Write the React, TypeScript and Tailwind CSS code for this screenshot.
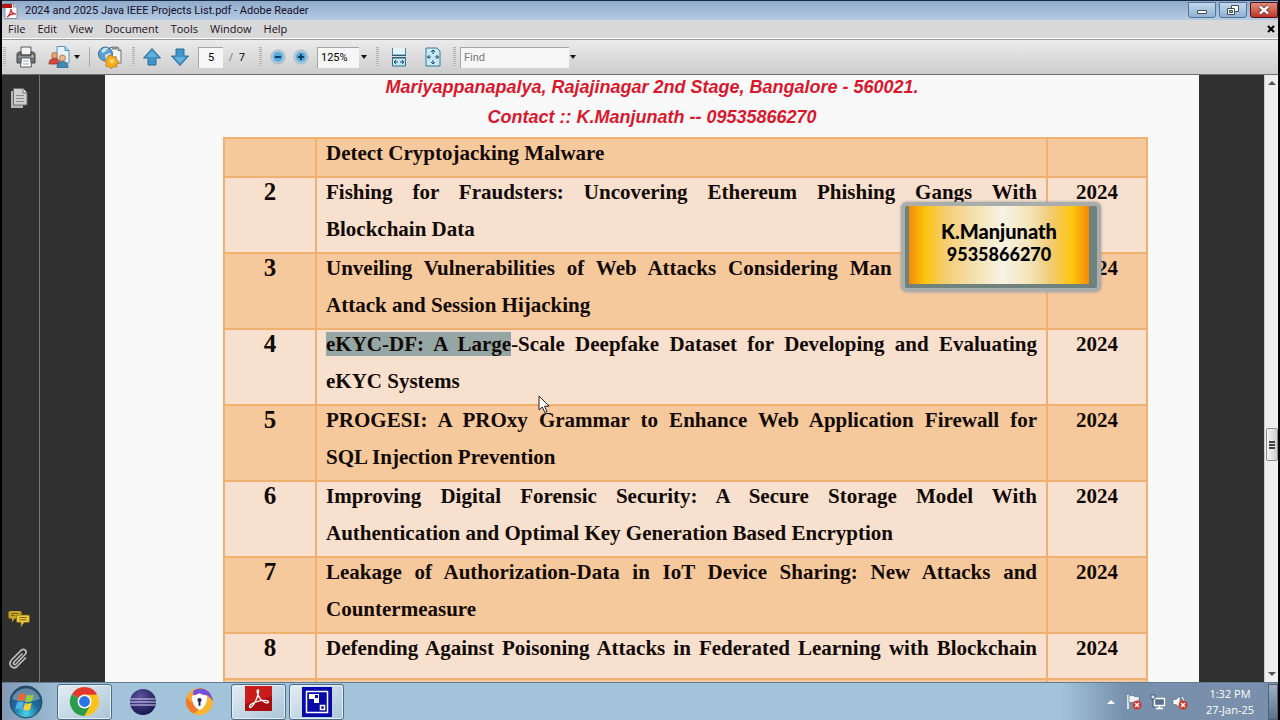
import React from 'react';

interface Project {
  no: string;
  lines: string[];
  year: string;
  selected?: string;
}

const projects: Project[] = [
  { no: '2', lines: ['Fishing for Fraudsters: Uncovering Ethereum Phishing Gangs With', 'Blockchain Data'], year: '2024' },
  { no: '3', lines: ['Unveiling Vulnerabilities of Web Attacks Considering Man in the Middle', 'Attack and Session Hijacking'], year: '2024' },
  { no: '4', selected: 'eKYC-DF: A Large', lines: ['-Scale Deepfake Dataset for Developing and Evaluating', 'eKYC Systems'], year: '2024' },
  { no: '5', lines: ['PROGESI: A PROxy Grammar to Enhance Web Application Firewall for', 'SQL Injection Prevention'], year: '2024' },
  { no: '6', lines: ['Improving Digital Forensic Security: A Secure Storage Model With', 'Authentication and Optimal Key Generation Based Encryption'], year: '2024' },
  { no: '7', lines: ['Leakage of Authorization-Data in IoT Device Sharing: New Attacks and', 'Countermeasure'], year: '2024' },
  { no: '8', lines: ['Defending Against Poisoning Attacks in Federated Learning with Blockchain'], year: '2024' }
];

const menus = ['File', 'Edit', 'View', 'Document', 'Tools', 'Window', 'Help'];

function ReaderIcon() {
  return (
    <svg className="w-4 h-4" viewBox="0 0 16 16">
      <path d="M3 .5h8.500l3.500 3.500v11.500H3z" fill="#fff" stroke="#8b8b93" />
      <path d="M11.500.5V4H15" fill="#ddd" stroke="#8b8b93" />
      <path d="M0 1h10v4H0z" fill="#b3161b" />
      <path d="M5 14c2-1 4-5 4-8 0 3 2 5 5 5-3-.5-6 0-9 3" fill="none" stroke="#cf2226" strokeWidth="1.200" />
    </svg>
  );
}

function PrinterIcon() {
  return (
    <svg className="w-5 h-6" viewBox="0 0 20 24">
      <path d="M5 2h10v8H5z" fill="#f4f4f4" stroke="#55585a" />
      <path d="M1 8.500 3 7h2v3h10V7h2l2 1.500V18H1z" fill="#6f7476" stroke="#3e4244" />
      <path d="M2 12h16" stroke="#a8adaf" />
      <path d="M5.500 13h9l1 9h-11z" fill="#fff" stroke="#55585a" />
      <path d="M7 16h6M7 19h6" stroke="#9fa3a5" />
      <circle cx="16.500" cy="11" r="1" fill="#bfe07c" />
    </svg>
  );
}

function ShareIcon() {
  return (
    <svg className="w-6 h-6" viewBox="0 0 24 24">
      <path d="M9 1.500h8l4 4V18H9z" fill="#e6f3fa" stroke="#5b95b5" />
      <path d="M17 1.500v4h4" fill="#9ccbe2" stroke="#5b95b5" />
      <circle cx="6.500" cy="10.500" r="3" fill="#e5a56c" stroke="#a35b2d" strokeWidth=".7" />
      <path d="M1 19c0-4 2-5.500 5.500-5.500S12 15 12 19z" fill="#d14a3f" stroke="#94291f" strokeWidth=".7" />
      <circle cx="14.500" cy="13" r="3" fill="#edbd86" stroke="#a35b2d" strokeWidth=".7" />
      <path d="M9 22.500c0-4 2-6 5.500-6s5.500 2 5.500 6z" fill="#4489b4" stroke="#275f83" strokeWidth=".7" />
    </svg>
  );
}

function CollaborateIcon() {
  return (
    <svg className="w-6 h-6" viewBox="0 0 24 24">
      <path d="M12 2.500h8l3 3V18H12z" fill="#f5f5f5" stroke="#6c6c6c" />
      <path d="M14 1.500h5v3h-5z" fill="#8b8b8b" />
      <path d="M20 2.500v3h3" fill="#ccc" stroke="#6c6c6c" />
      <circle cx="7.500" cy="9" r="7" fill="#5d9fd0" stroke="#3c6e96" />
      <path d="M3 6c2-3 5-4 7-3L8 6 5 8zM7 10l4-2 2 1-2 4-3 1z" fill="#cfe3ef" />
      <path d="m13 10 2 2 3-.500.500 3 2.500 2-2 2.500-.500 3-3-.300-2.500 1.800-2.300-2-3-.500.500-3L7 15.500l2.500-2 .500-2.500z" fill="#f6ad1c" stroke="#b9760a" strokeWidth=".8" />
      <circle cx="14" cy="16" r="2.500" fill="#fbd165" />
    </svg>
  );
}

function ArrowIcon({ down }: { down?: boolean }) {
  return (
    <svg className={down ? 'w-5 h-5 rotate-180' : 'w-5 h-5'} viewBox="0 0 20 20">
      <path d="M10 1.500 18.500 11H14v7H6v-7H1.500z" fill="#3f94cd" stroke="#2c6c96" strokeLinejoin="round" />
      <path d="M10 3.500 16 10H4z" fill="#63aedb" />
    </svg>
  );
}

function ZoomIcon({ plus }: { plus?: boolean }) {
  return (
    <svg className="w-4 h-4" viewBox="0 0 16 16">
      <circle cx="8" cy="8" r="7" fill="#a9cfe6" stroke="#a9b4bb" />
      <circle cx="8" cy="8" r="5" fill="#5caadb" />
      <path d={plus ? 'M5 8h6M8 5v6' : 'M5 8h6'} stroke="#0e3f66" strokeWidth="2" />
    </svg>
  );
}

function FitWidthIcon() {
  return (
    <svg className="w-4 h-5" viewBox="0 0 16 20">
      <path d="M1.500 1v7h13V1" fill="#e3f3fa" stroke="#4b87a4" />
      <path d="M1.500 19v-8h13v8z" fill="#c5e5f3" stroke="#2f7191" />
      <path d="M1 8.500h14M1 10.500h14" stroke="#2d5c74" />
      <path d="M3 15h4M9 15h4M5 13l-2 2 2 2M11 13l2 2-2 2" fill="none" stroke="#174a66" />
    </svg>
  );
}

function FitPageIcon() {
  return (
    <svg className="w-4 h-5" viewBox="0 0 16 20">
      <path d="M1 1h11l3 3v15H1z" fill="#c9e8f5" stroke="#34789a" />
      <path d="M8 3v4M6 5l2-2 2 2M8 17v-4M6 15l2 2 2-2M2.500 10H6M4.500 8l-2 2 2 2M13.500 10H10M11.500 8l2 2-2 2" fill="none" stroke="#174a66" />
    </svg>
  );
}

function Caret() {
  return (
    <svg className="w-[6px] h-[4px]" viewBox="0 0 6 4">
      <path d="M0 0h6L3 4z" fill="#111" />
    </svg>
  );
}

function Grip() {
  return <div className="w-[3px] h-5 bg-[repeating-linear-gradient(180deg,#b0b0b0_0_1px,#dedede_1px_2px)]" />;
}

function TitleBar() {
  const btn = 'w-7 h-4 flex items-center justify-center rounded-b-[3px] border border-[#52749b] bg-linear-to-b from-[#c3d7eb] to-[#8fb1d3]';
  return (
    <header className="h-5 shrink-0 flex items-center border-t border-[#1b2a45] bg-linear-to-b from-[#8faacb] to-[#b5cbe2]">
      <ReaderIcon />
      <h1 className="ml-[7px] flex-1 font-['Roboto'] text-[11px] leading-4 text-[#150f28]">2024 and 2025 Java IEEE Projects List.pdf - Adobe Reader</h1>
      <div className="flex gap-[3px] self-start pt-[1px]">
        <button aria-label="Minimize" className={btn}>
          <svg className="w-3 h-3" viewBox="0 0 12 12"><path d="M1.500 6.500h9v3h-9z" fill="#fff" stroke="#444e5c" /></svg>
        </button>
        <button aria-label="Restore" className={btn}>
          <svg className="w-3 h-3" viewBox="0 0 12 12">
            <path d="M4.500 1.500h7v6h-7z" fill="#fff" stroke="#444e5c" />
            <path d="M.5 4.500h7v6h-7z" fill="#fff" stroke="#444e5c" />
            <path d="M2.500 6.500h3v2h-3z" fill="#8fb1d3" stroke="#444e5c" />
          </svg>
        </button>
        <button aria-label="Close" className="w-7 h-4 flex items-center justify-center rounded-bl-[3px] border border-[#551317] bg-linear-to-b from-[#df8a78] to-[#bd3522]">
          <svg className="w-3 h-3" viewBox="0 0 12 12">
            <path d="m2 2.500 8 7M10 2.500l-8 7" stroke="#5c2b2b" strokeWidth="4" />
            <path d="m2 2.500 8 7M10 2.500l-8 7" stroke="#fff" strokeWidth="2.400" />
          </svg>
        </button>
      </div>
    </header>
  );
}

function MenuBar() {
  return (
    <nav className="h-[19px] shrink-0 flex items-center bg-[#d8d8d8] border-b border-white pl-[6px] pr-[3px] text-[11px] leading-4 text-[#1c0f22]">
      <div className="flex-1 flex gap-3">
        {menus.map((m) => (
          <button key={m}>{m}</button>
        ))}
      </div>
      <button aria-label="Close document">
        <svg className="w-2 h-2" viewBox="0 0 8 8"><path d="m1 1 6 6M7 1 1 7" stroke="#000" strokeWidth="2.200" /></svg>
      </button>
    </nav>
  );
}

function Toolbar() {
  const box = "h-[21px] bg-[#f6f6f6] border-t border-l border-[#a5a5a5] font-['Roboto'] text-[11px] leading-4 outline-none";
  return (
    <div className="h-9 shrink-0 flex items-center border-t border-b border-t-[#9a9a9a] border-b-[#6d6d6d] bg-linear-to-b from-[#ebebeb] to-[#cdcdcd] pl-[1px]">
      <Grip />
      <button aria-label="Print" className="ml-[10px]"><PrinterIcon /></button>
      <button aria-label="Share" className="ml-3 flex items-center gap-[2px]"><ShareIcon /><Caret /></button>
      <div className="ml-[9px] w-[1px] h-5 bg-[#aaa]" />
      <button aria-label="Collaborate" className="ml-2"><CollaborateIcon /></button>
      <div className="ml-[10px]"><Grip /></div>
      <button aria-label="Previous page" className="ml-[7px]"><ArrowIcon /></button>
      <button aria-label="Next page" className="ml-2"><ArrowIcon down /></button>
      <input aria-label="Page number" defaultValue="5" className={`${box} ml-2 w-[25px] text-center`} />
      <span className="ml-[6px] w-6 text-[11px] leading-4"><span className="text-[#777]">/</span>&nbsp; 7</span>
      <div className="ml-[6px]"><Grip /></div>
      <button aria-label="Zoom out" className="ml-2"><ZoomIcon /></button>
      <button aria-label="Zoom in" className="ml-[7px]"><ZoomIcon plus /></button>
      <input aria-label="Zoom level" defaultValue="125%" className={`${box} ml-2 w-[42px] pl-[3px]`} />
      <button aria-label="Zoom presets" className="ml-[2px]"><Caret /></button>
      <div className="ml-[9px]"><Grip /></div>
      <button aria-label="Fit width" className="ml-3"><FitWidthIcon /></button>
      <button aria-label="Fit page" className="ml-[18px]"><FitPageIcon /></button>
      <div className="ml-[12px]"><Grip /></div>
      <input aria-label="Find" placeholder="Find" className={`${box} ml-[4px] w-[109px] pl-[3px] placeholder:text-[#777]`} />
      <button aria-label="Find options" className="ml-[1px]"><Caret /></button>
    </div>
  );
}

function SidePanel() {
  return (
    <aside className="w-[38px] shrink-0 flex flex-col items-center bg-[#303030] border-r border-[#777] pt-3 pb-3 pr-1">
      <button aria-label="Pages">
        <svg className="w-[18px] h-[22px]" viewBox="0 0 18 22">
          <path d="M1 4h12v17H1z" fill="#b5b5b5" />
          <path d="M3.500 1.500H13L17 6v12H3.500z" fill="#cfcfcf" stroke="#6c6c6c" />
          <path d="M13 1.500V6h4" fill="#eee" stroke="#6c6c6c" />
          <path d="M6 8.500h8M6 11.500h8M6 14.500h8" stroke="#8a8a8a" />
        </svg>
      </button>
      <button aria-label="Comments" className="mt-auto">
        <svg className="w-[22px] h-[18px]" viewBox="0 0 22 18">
          <path d="M2 1h10q1.500 0 1.500 1.500V7q0 1.500-1.500 1.500H7L4 12V8.500H2Q.5 8.500.5 7V2.500Q.5 1 2 1z" fill="#c9a221" />
          <path d="M10 5h10q1.500 0 1.500 1.500V11q0 1.500-1.500 1.500h-4L13 17v-4.500h-3Q8.500 12.500 8.500 11V6.500Q8.500 5 10 5z" fill="#ebc740" stroke="#7d6414" strokeWidth=".7" />
          <path d="M3 3.500h7M3 5.500h4M11.500 7.500h7M11.500 9.800h7" stroke="#7d6414" />
        </svg>
      </button>
      <button aria-label="Attachments" className="mt-5">
        <svg className="w-[22px] h-[22px]" viewBox="0 0 22 22" fill="none" stroke="#bdbdbd" strokeWidth="1.700" strokeLinecap="round">
          <path d="m14 6-8 8c-1.500 1.700.500 3.500 2 2l9-9.500c3-3.500-1-6.500-4-4L3.500 12C-.5 17 5 22 9 18.500l8.500-8.500" />
        </svg>
      </button>
    </aside>
  );
}

function ProjectRow({ project, shaded }: { project: Project; shaded: boolean }) {
  const { no, lines, year, selected } = project;
  return (
    <tr className={shaded ? 'bg-[#f6c99c]' : 'bg-[#f7e0ce]'}>
      <td className="border-2 border-[#f0b070] p-0 align-top text-center text-[25px] leading-7">{no}</td>
      <td className="border-2 border-[#f0b070] py-0 px-[9px] align-top">
        <div className={lines.length > 1 ? 'h-[74px]' : 'h-11'}>
          <p className="whitespace-nowrap [text-align-last:justify]">
            {selected && <mark className="bg-[#96a6a5] text-inherit">{selected}</mark>}
            {lines[0]}
          </p>
          {lines[1] && <p className="mt-[9px]">{lines[1]}</p>}
        </div>
      </td>
      <td className="border-2 border-[#f0b070] p-0 align-top text-center">{year}</td>
    </tr>
  );
}

function PdfPage() {
  return (
    <article className="flex-1 min-w-0 mx-[65px] overflow-hidden bg-[#f9f9f9]">
      <div className="text-center font-['Liberation_Sans'] font-bold italic text-[18px] leading-6 text-[#d9182d]">
        <p>Mariyappanapalya, Rajajinagar 2nd Stage, Bangalore - 560021.</p>
        <p className="mt-[6px]">Contact :: K.Manjunath -- 09535866270</p>
      </div>
      <table className="mt-2 ml-[118px] w-[925px] table-fixed border-collapse font-['Liberation_Serif'] font-bold text-[21px] leading-7 text-[#120a06]">
        <colgroup>
          <col className="w-[92px]" />
          <col />
          <col className="w-[100px]" />
        </colgroup>
        <tbody>
          <tr className="bg-[#f6c99c]">
            <td className="border-2 border-[#f0b070] h-[39px]" />
            <td className="border-2 border-[#f0b070] py-0 px-[9px] align-top">Detect Cryptojacking Malware</td>
            <td className="border-2 border-[#f0b070]" />
          </tr>
          {projects.map((p, i) => (
            <ProjectRow key={p.no} project={p} shaded={i % 2 === 1} />
          ))}
          <tr className="bg-[#f6c99c]">
            <td className="border-2 border-[#f0b070] h-9" />
            <td className="border-2 border-[#f0b070]" />
            <td className="border-2 border-[#f0b070]" />
          </tr>
        </tbody>
      </table>
    </article>
  );
}

function ScrollBar() {
  return (
    <div className="w-[14px] shrink-0 flex flex-col items-center bg-[#eee] border-l border-[#ccc] py-1">
      <svg className="w-2 h-2" viewBox="0 0 8 8"><path d="M0 6h8L4 2z" fill="#555" /></svg>
      <div className="grow-[36]" />
      <div className="w-3 h-[33px] shrink-0 flex items-center justify-center rounded-[2px] border border-[#8c8c8c] bg-linear-to-r from-[#f4f4f4] to-[#cfcfcf]">
        <div className="w-[6px] h-[8px] bg-[repeating-linear-gradient(180deg,#444_0_2px,#ddd_2px_3px)]" />
      </div>
      <div className="grow-[22]" />
      <svg className="w-2 h-2" viewBox="0 0 8 8"><path d="M0 2h8L4 6z" fill="#555" /></svg>
    </div>
  );
}

function ContactCard() {
  return (
    <div className="absolute top-[202px] right-[179px] w-[200px] h-[90px] rounded-[6px] border-4 border-[#a9aeac] bg-[#6f827e] pl-1 pr-2 pb-[4px] shadow-[0_0_3px_#999]">
      <div className="h-full flex flex-col items-center justify-center bg-[linear-gradient(90deg,#f58a06_0%,#fcc50d_9%,#f5cd70_20%,#f3e3b4_38%,#f7f3e4_52%,#f3e3b4_68%,#f2cc78_78%,#fcc50d_91%,#f58a06_100%)] pb-1 font-['Lato'] font-black leading-[23px] text-black">
        <p className="text-[20px]">K.Manjunath</p>
        <p className="text-[18px]">9535866270</p>
      </div>
    </div>
  );
}

function WindowsOrb() {
  return (
    <svg className="w-[34px] h-[34px]" viewBox="0 0 34 34">
      <defs>
        <radialGradient id="orb" cx="50%" cy="85%" r="80%">
          <stop offset="0" stopColor="#48d5ea" />
          <stop offset=".5" stopColor="#1c6b9c" />
          <stop offset="1" stopColor="#244b70" />
        </radialGradient>
      </defs>
      <circle cx="17" cy="17" r="16" fill="url(#orb)" stroke="#27465f" />
      <path d="M3 14a14.500 14.500 0 0 1 28 0Q17 19 3 14z" fill="#fff" opacity=".3" />
      <path d="M10 9.500q3.500-2 6.500-.3L15 16q-3-1.600-6.500 0z" fill="#ee6532" />
      <path d="M17.800 9.800q3.200 1.700 7-.3L23 16q-3.600 1.900-6.700.4z" fill="#9ccc3c" />
      <path d="M8 17.500q3.500-1.800 6.700 0L13 24.500q-3-1.700-6.700 0z" fill="#4eb2e8" />
      <path d="M16 18q3.200 1.700 6.800-.2L21 24.500q-3.500 2-6.700.3z" fill="#fbcf3a" />
    </svg>
  );
}

function ChromeIcon() {
  return (
    <svg className="w-[31px] h-[31px]" viewBox="0 0 48 48">
      <path d="M24 24 4.500 12.700A22.500 22.500 0 0 1 43.500 12.700z" fill="#e3392c" />
      <path d="M24 24h0L4.500 12.700A22.500 22.500 0 0 0 24 46.500l10-17z" fill="#2a9c4a" />
      <path d="M24 13.500h20A22.500 22.500 0 0 1 24 46.500l9.200-17z" fill="#fbc31b" />
      <circle cx="24" cy="24" r="10.800" fill="#fff" />
      <circle cx="24" cy="24" r="8.400" fill="#2a72e5" />
    </svg>
  );
}

function EclipseIcon() {
  return (
    <svg className="w-7 h-7" viewBox="0 0 28 28">
      <defs>
        <radialGradient id="ecl" cx="40%" cy="30%" r="75%">
          <stop offset="0" stopColor="#5a539f" />
          <stop offset="1" stopColor="#17124d" />
        </radialGradient>
      </defs>
      <circle cx="14" cy="14" r="13" fill="url(#ecl)" />
      <path d="M1.500 11h25M1 14h26M1.500 17h25" stroke="#d9daf2" strokeWidth="1.100" />
    </svg>
  );
}

function ShieldBrowserIcon() {
  return (
    <svg className="w-[29px] h-[29px]" viewBox="0 0 30 30">
      <circle cx="15" cy="15" r="14" fill="#f5b531" />
      <path d="M1.500 11A14 14 0 0 0 9 27.500L17 22 7 8z" fill="#f0782c" />
      <path d="M1.500 11Q4 5 9 5l4 6-6 5z" fill="#f7a436" />
      <path d="M9 3.500Q14 0 21 2.500 28 6 29 15q-3-6-9-7L10 9Q7 6 9 3.500z" fill="#7250dc" />
      <path d="M15 6.500q4 2.500 8 2.500 0 11-8 15Q7 20 7 9q4 0 8-2.500z" fill="#fff" />
      <circle cx="15" cy="13.500" r="2.200" fill="#27284f" />
      <path d="M14 14h2v5.500h-2z" fill="#27284f" />
    </svg>
  );
}

function AdobeIcon() {
  return (
    <svg className="w-[27px] h-[31px]" viewBox="0 0 27 31">
      <path d="M0 0h27v25H0z" fill="#a80d0f" />
      <path d="M0 0h27v10L0 18z" fill="#cb1c1c" />
      <path d="M13 4c-2 0-.500 5 2 8.500 2 3 8 6 8.500 3.500.500-2-7-2-11-.500-4 1.200-8.500 3.500-8 5.500 1 2 5-3 7-8C13 9 14.500 4 13 4z" fill="none" stroke="#fff" strokeWidth="1.300" />
    </svg>
  );
}

function RecorderIcon() {
  return (
    <svg className="w-[30px] h-[30px]" viewBox="0 0 30 30">
      <path d="M0 0h30v30H0z" fill="#0909a8" />
      <path d="M4.500 4.500h21v21h-21z" fill="none" stroke="#fff" strokeWidth="1.500" />
      <path d="M7 7h10v9H7z" fill="#fff" />
      <path d="M7 12h5v4H7zM13 8h3v3h-3z" fill="#0909a8" />
      <path d="M18.500 18.500h4v4h-4z" fill="none" stroke="#fff" strokeWidth="1.500" />
    </svg>
  );
}

function TaskBar() {
  const open = 'w-[55px] h-9 flex items-center justify-center rounded-[3px] border border-[#4d6b84] bg-linear-to-br from-[#e3edf4] to-[#aac5d8] shadow-[inset_0_0_0_1px_#e5eff6]';
  const idle = 'w-[57px] h-9 flex items-center justify-center';
  return (
    <footer className="h-[38px] shrink-0 flex items-center border-t border-[#5f7d95] bg-[linear-gradient(90deg,#8299b5_0%,#a2c3da_5%,#a2c3da_83%,#7790ac_88%,#7a8fab_100%)]">
      <button aria-label="Start" className="ml-[7px]"><WindowsOrb /></button>
      <button aria-label="Chrome" className={`${open} ml-[14px]`}><ChromeIcon /></button>
      <button aria-label="Eclipse" className={`${idle} ml-[2px]`}><EclipseIcon /></button>
      <button aria-label="Secure Browser" className={idle}><ShieldBrowserIcon /></button>
      <button aria-label="Adobe Reader" className={`${open} ml-[3px]`}><AdobeIcon /></button>
      <button aria-label="Recorder" className={`${open} ml-[3px]`}><RecorderIcon /></button>
      <div className="ml-auto flex items-center">
        <button aria-label="Show hidden icons">
          <svg className="w-2 h-2" viewBox="0 0 8 8"><path d="M0 6h8L4 2z" fill="#fff" /></svg>
        </button>
        <svg className="ml-[11px] w-4 h-4" viewBox="0 0 16 16">
          <path d="M2 1v14" stroke="#fff" strokeWidth="1.500" />
          <path d="M3 2q3-1.500 5 0t5 0v7q-3 1.500-5 0T3 9z" fill="#eef2f7" stroke="#4a5b70" strokeWidth=".6" />
          <circle cx="11" cy="11" r="4.500" fill="#d6352d" />
          <path d="m9 9 4 4M13 9l-4 4" stroke="#fff" strokeWidth="1.500" />
        </svg>
        <svg className="ml-2 w-4 h-4" viewBox="0 0 16 16">
          <path d="M4.500 4.500h10v7h-10z" fill="#56718f" stroke="#fff" strokeWidth="1.300" />
          <path d="M9.500 12v2M6 14.500h7" stroke="#fff" strokeWidth="1.500" />
          <path d="M1 1h4v4H1zM3 5v8h2" fill="#d8e2ec" stroke="#34465b" strokeWidth=".8" />
        </svg>
        <svg className="ml-[6px] w-4 h-4" viewBox="0 0 16 16">
          <path d="M1 5.500h3L8 2v12l-4-3.500H1z" fill="#fff" stroke="#4a5b70" strokeWidth=".6" />
          <path d="M10 3q3 3 1 7" fill="none" stroke="#fff" />
          <circle cx="11" cy="11" r="4.500" fill="#d6352d" />
          <path d="m9 9 4 4M13 9l-4 4" stroke="#fff" strokeWidth="1.500" />
        </svg>
        <div className="ml-3 w-[60px] text-center text-[11px] leading-4 text-white">
          <p>1:32 PM</p>
          <p>27-Jan-25</p>
        </div>
        <button aria-label="Show desktop" className="ml-2 w-[10px] h-9 border border-[#4c6079] bg-linear-to-b from-[#9dafc5] to-[#5d7189]" />
      </div>
    </footer>
  );
}

export default function App() {
  return (
    <div className="relative h-screen flex flex-col overflow-hidden bg-black px-[2px] font-['Open_Sans',sans-serif]">
      <TitleBar />
      <MenuBar />
      <Toolbar />
      <main className="flex-1 min-h-0 flex bg-[#303030]">
        <SidePanel />
        <PdfPage />
        <ScrollBar />
      </main>
      <TaskBar />
      <ContactCard />
      {/* mouse pointer */}
      <svg className="absolute left-[538px] top-[395px] w-3 h-[19px]" viewBox="0 0 12 19">
        <path d="M1 1v14l3.300-3 2.500 5.500 2.200-1-2.500-5.300H11z" fill="#fff" stroke="#222" />
      </svg>
    </div>
  );
}
